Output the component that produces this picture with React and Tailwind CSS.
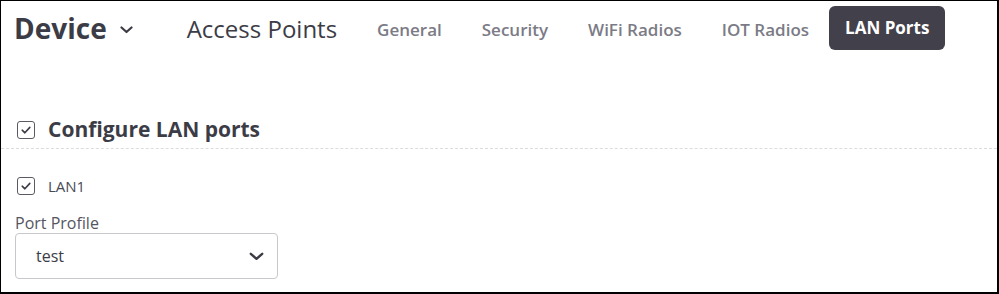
import { useState } from "react";

const tabs = ["General", "Security", "WiFi Radios", "IOT Radios"];

function CheckIcon() {
  return (
    <span className="flex h-[18px] w-[18px] items-center justify-center rounded-[3px] border-[1.5px] border-[#5a5a62]">
      <svg width="12" height="12" viewBox="0 0 12 12" fill="none">
        <path d="M2.2 6.2 L4.9 8.8 L9.8 3.4" stroke="#3c3c46" strokeWidth="1.6" strokeLinecap="round" strokeLinejoin="round" />
      </svg>
    </span>
  );
}

export default function App() {
  const [profile] = useState("test");

  return (
    <div className="h-[294px] w-[999px] border-t border-l border-r-2 border-b-2 border-black bg-white font-['Open_Sans',sans-serif] text-[#3c3c46]">
      {/* header */}
      <div className="flex items-center pl-[13px] pt-[5px]">
        <div className="flex h-[44px] items-center">
          <span className="text-[28px] font-bold leading-none">Device</span>
          <svg className="ml-[13px] mt-[3px]" width="13" height="8" viewBox="0 0 13 8" fill="none">
            <path d="M1.5 1.5 L6.5 6 L11.5 1.5" stroke="#3c3c46" strokeWidth="2.2" strokeLinecap="round" strokeLinejoin="round" />
          </svg>
        </div>
        <span className="ml-[54px] mt-[2px] text-[24px] leading-none text-[#3c3c46]">Access Points</span>
        <div className="ml-[20px] flex items-center">
          {tabs.map((t) => (
            <span key={t} className="px-5 pt-[4px] text-[17px] font-semibold text-[#7b7b86]">
              {t}
            </span>
          ))}
          <span className="flex h-[44px] items-center rounded-[6px] bg-[#42414b] px-[16px] text-[17px] font-bold text-white">
            LAN Ports
          </span>
        </div>
      </div>

      {/* section title */}
      <div className="mt-[69px] flex items-center pl-[16px]">
        <CheckIcon />
        <span className="ml-[13px] text-[21px] font-bold leading-none text-[#3c3c46]">Configure LAN ports</span>
      </div>
      <div className="mt-[8px] border-t border-dashed border-[#dcdcdc]" />

      {/* LAN1 */}
      <div className="mt-[28px] flex items-center pl-[16px]">
        <CheckIcon />
        <span className="ml-[13px] text-[15px] leading-none text-[#4a4a55]">LAN1</span>
      </div>

      <div className="mt-[20px] pl-[14px]">
        <div className="text-[16px] leading-none text-[#55555f]">Port Profile</div>
        <div className="mt-[2px] flex h-[46px] w-[263px] items-center justify-between rounded-[4px] border border-[#c8c8cc] pl-[20px] pr-[13px]">
          <span className="text-[16px] text-[#3c3c46]">{profile}</span>
          <svg width="15" height="9" viewBox="0 0 15 9" fill="none">
            <path d="M1.8 1.8 L7.5 6.8 L13.2 1.8" stroke="#3c3c46" strokeWidth="2.4" strokeLinecap="round" strokeLinejoin="round" />
          </svg>
        </div>
      </div>
    </div>
  );
}
